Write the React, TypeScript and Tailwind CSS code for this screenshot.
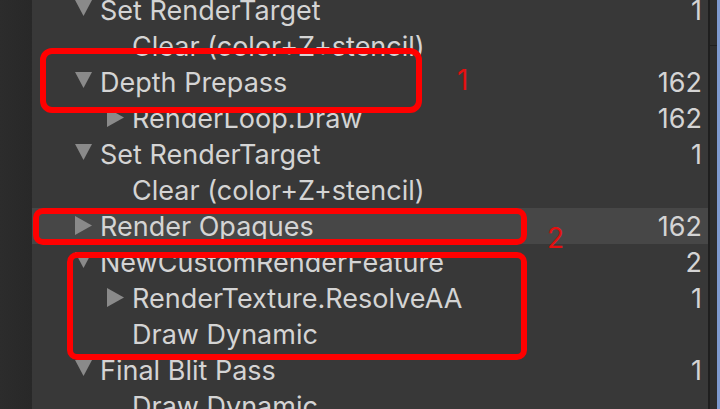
type Row = {
  label: string;
  level: 1 | 2;
  arrow?: "down" | "right";
  count?: string;
  selected?: boolean;
};

const rows: Row[] = [
  { label: "Set RenderTarget", level: 1, arrow: "down", count: "1" },
  { label: "Clear (color+Z+stencil)", level: 2 },
  { label: "Depth Prepass", level: 1, arrow: "down", count: "162" },
  { label: "RenderLoop.Draw", level: 2, arrow: "right", count: "162" },
  { label: "Set RenderTarget", level: 1, arrow: "down", count: "1" },
  { label: "Clear (color+Z+stencil)", level: 2 },
  { label: "Render Opaques", level: 1, arrow: "right", count: "162", selected: true },
  { label: "NewCustomRenderFeature", level: 1, arrow: "down", count: "2" },
  { label: "RenderTexture.ResolveAA", level: 2, arrow: "right", count: "1" },
  { label: "Draw Dynamic", level: 2 },
  { label: "Final Blit Pass", level: 1, arrow: "down", count: "1" },
  { label: "Draw Dynamic", level: 2 },
];

function Arrow({ dir }: { dir?: "down" | "right" }) {
  if (!dir) return null;
  if (dir === "down")
    return (
      <svg width="17" height="16" viewBox="0 0 17 16" className="mt-[-4px]">
        <path d="M0 0 H17 L8.5 16 Z" fill="#8a8a8a" />
      </svg>
    );
  return (
    <svg width="17" height="19" viewBox="0 0 17 19" className="mt-[-2px]">
      <path d="M0 0 L17 9.5 L0 19 Z" fill="#8a8a8a" />
    </svg>
  );
}

function TreeRow({ row }: { row: Row }) {
  return (
    <div
      className={`flex h-[36px] items-center pr-[6px] ${row.selected ? "bg-[#474747]" : ""}`}
      style={{ paddingLeft: row.level === 1 ? 43 : 75 }}
    >
      <div className="flex w-[25px] shrink-0 items-center">
        <Arrow dir={row.arrow} />
      </div>
      <span className="flex-1 whitespace-nowrap">{row.label}</span>
      <span>{row.count}</span>
    </div>
  );
}

export default function App() {
  return (
    <div className="relative flex h-[409px] w-[720px] overflow-hidden bg-[#383838] font-['Inter','Noto_Sans',sans-serif] text-[27px] leading-none text-[#d4d4d4]">
      <div className="w-[32px] shrink-0 bg-gradient-to-r from-[#2c2c2c] to-[#282828]" />

      <div className="flex-1 overflow-hidden">
        <div className="mt-[-8px]">
          {rows.map((r, i) => (
            <TreeRow key={i} row={r} />
          ))}
        </div>
      </div>

      <div className="flex w-[12px] shrink-0 border-l-2 border-[#1f1f1f] bg-[#2e2e2e]">
        <div className="mt-[45px] flex-1 border-t border-[#202020]" />
        <div className="w-[3px] bg-[#7f9bd0]" />
      </div>

      {/* annotations */}
      <div className="pointer-events-none absolute left-[40px] top-[48px] h-[65px] w-[382px] rounded-[12px] border-[6px] border-[#ff0000]" />
      <div className="pointer-events-none absolute left-[33px] top-[208px] h-[37px] w-[494px] rounded-[10px] border-[6px] border-[#ff0000]" />
      <div className="pointer-events-none absolute left-[67px] top-[252px] h-[108px] w-[460px] rounded-[10px] border-[6px] border-[#ff0000]" />
      <span className="absolute left-[457px] top-[66px] text-[28px] text-[#e31010]">1</span>
      <span className="absolute left-[547px] top-[224px] text-[28px] text-[#e31010]">2</span>
    </div>
  );
}
